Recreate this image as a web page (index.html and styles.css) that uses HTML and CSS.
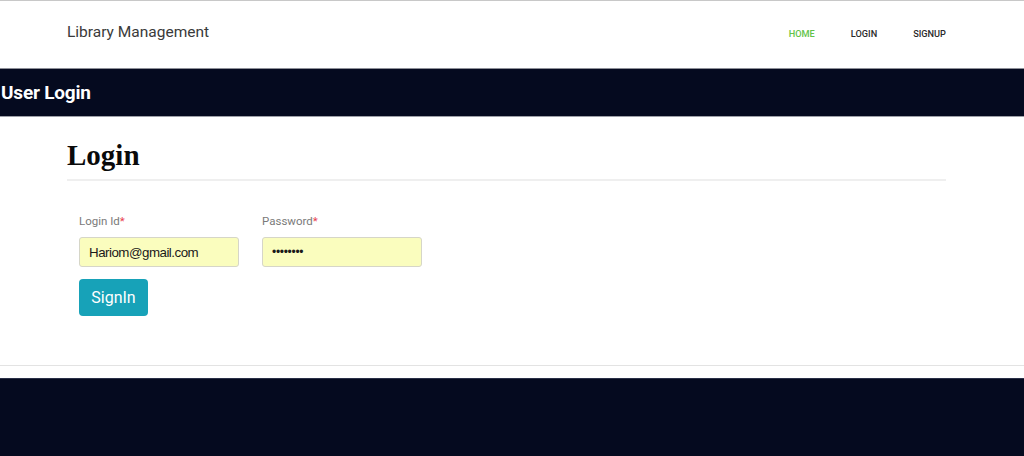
FILE: index.html
```html
<!DOCTYPE html>
<html lang="en">
<head>
<meta charset="utf-8">
<title>Library Management</title>
<link rel="stylesheet" href="styles.css">
</head>
<body>
<header class="navbar">
  <div class="nav-inner">
    <a class="brand" href="#">Library Management</a>
    <ul class="nav-links">
      <li><a class="active" href="#">HOME</a></li>
      <li><a href="#">LOGIN</a></li>
      <li><a href="#">SIGNUP</a></li>
    </ul>
  </div>
</header>
<div class="page-band"><h2>User Login</h2></div>
<main class="content">
  <h1 class="title">Login</h1>
  <div class="rule"></div>
  <form class="login-form">
    <div class="fields">
      <div class="field">
        <label>Login Id<span class="req">*</span></label>
        <input type="text" value="Hariom@gmail.com">
      </div>
      <div class="field">
        <label>Password<span class="req">*</span></label>
        <input type="password" class="pw" value="hariom12">
      </div>
    </div>
    <button type="button" class="btn">SignIn</button>
  </form>
</main>
<div class="sep"></div>
<footer class="footer"></footer>
</body>
</html>
```

FILE: styles.css
```css
* { box-sizing: border-box; }
html, body { margin: 0; padding: 0; }
body {
  font-family: Roboto, "Liberation Sans", sans-serif;
  background: #fff;
  color: #333;
  border-top: 1px solid #c8c8c8;
  overflow: hidden;
}
a { text-decoration: none; }

.navbar { height: 67px; }
.nav-inner {
  margin: 0 78px 0 67px;
  height: 100%;
  display: flex;
  align-items: center;
  justify-content: space-between;
}
.brand {
  font-size: 15.5px;
  color: #3a3a3a;
  padding-bottom: 5px;
}
.nav-links {
  list-style: none;
  margin: 0;
  padding: 0 0 6px 0;
  display: flex;
  gap: 36px;
}
.nav-links a {
  font-size: 9.2px;
  font-weight: 500;
  color: #2a2a2a;
}
.nav-links a.active { color: #63c34a; }

.page-band {
  background: #050a1f;
  height: 49px;
  border-top: 1px solid #8d8f98;
  border-bottom: 1px solid #9ea0a8;
  display: flex;
  align-items: center;
}
.page-band h2 {
  margin: 0;
  padding: 0 0 1px 1px;
  color: #fff;
  font-size: 19px;
  font-weight: 700;
  letter-spacing: -0.2px;
}

.content {
  margin: 0 78px 0 67px;
  padding-top: 18px;
}
.title {
  margin: 0;
  font-family: "Liberation Serif", "DejaVu Serif", serif;
  font-size: 29px;
  font-weight: 700;
  color: #0a0a0a;
  line-height: 40px;
}
.rule {
  height: 2px;
  background: #efefef;
  margin-top: 4px;
}
.login-form {
  padding: 33px 12px 0 12px;
}
.fields {
  display: flex;
  gap: 23px;
}
.field {
  display: flex;
  flex-direction: column;
  width: 160px;
}
.field label {
  font-size: 11.5px;
  color: #7a7a7a;
  line-height: 14px;
  margin-bottom: 9px;
}
.req { color: #e8414f; }
.field input {
  height: 30px;
  width: 160px;
  background: #fafdbe;
  border: 1px solid #d6d6c8;
  border-radius: 3px;
  padding: 0 9px;
  font-family: "Liberation Sans", Arial, sans-serif;
  font-size: 13.333px;
  letter-spacing: -0.5px;
  color: #1a1a1a;
  outline: none;
}
.field input.pw {
  font-size: 12px;
  letter-spacing: -0.3px;
}
.btn {
  margin-top: 12px;
  width: 69px;
  height: 37px;
  border: none;
  border-radius: 4px;
  background: #17a2b8;
  color: #fff;
  font-family: Roboto, "Liberation Sans", sans-serif;
  font-size: 16px;
  cursor: pointer;
}
.sep {
  margin-top: 49px;
  height: 1px;
  background: #e3e3e3;
}
.footer {
  margin-top: 12px;
  height: 78px;
  background: #050a1f;
  border-top: 1px solid #2a2f48;
}
```
